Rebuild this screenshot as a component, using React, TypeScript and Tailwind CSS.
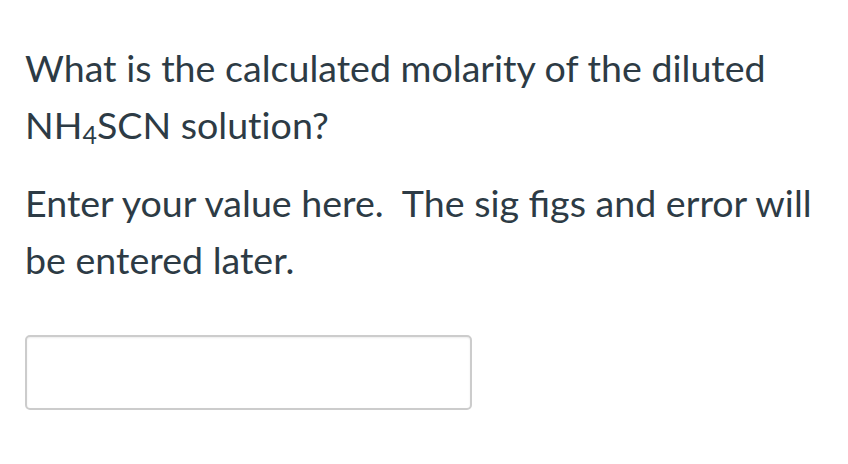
export default function App() {
  return (
    <div className="w-[848px] h-[464px] bg-white pt-[39px] pl-[25px] text-[#2d3b45] [font-variant-ligatures:none]" style={{ fontFamily: "Lato, 'Liberation Sans', sans-serif" }}>
      <p className="text-[37.6px] leading-[57px]">
        What is the calculated molarity of the diluted NH<sub className="text-[25px] leading-none bottom-[-5px]">4</sub>SCN solution?
      </p>
      <p className="text-[37.6px] leading-[57px] mt-[21px] w-[800px]">
        Enter your value here.&nbsp; The sig <span className="[font-variant-ligatures:common-ligatures]">figs</span> and error will be entered later.
      </p>
      <div className="mt-[47px] w-[447px] h-[75px] border-2 border-[#cccccc] rounded-[5px] shadow-[inset_0_1px_2px_rgba(0,0,0,0.08)]" />
    </div>
  );
}
